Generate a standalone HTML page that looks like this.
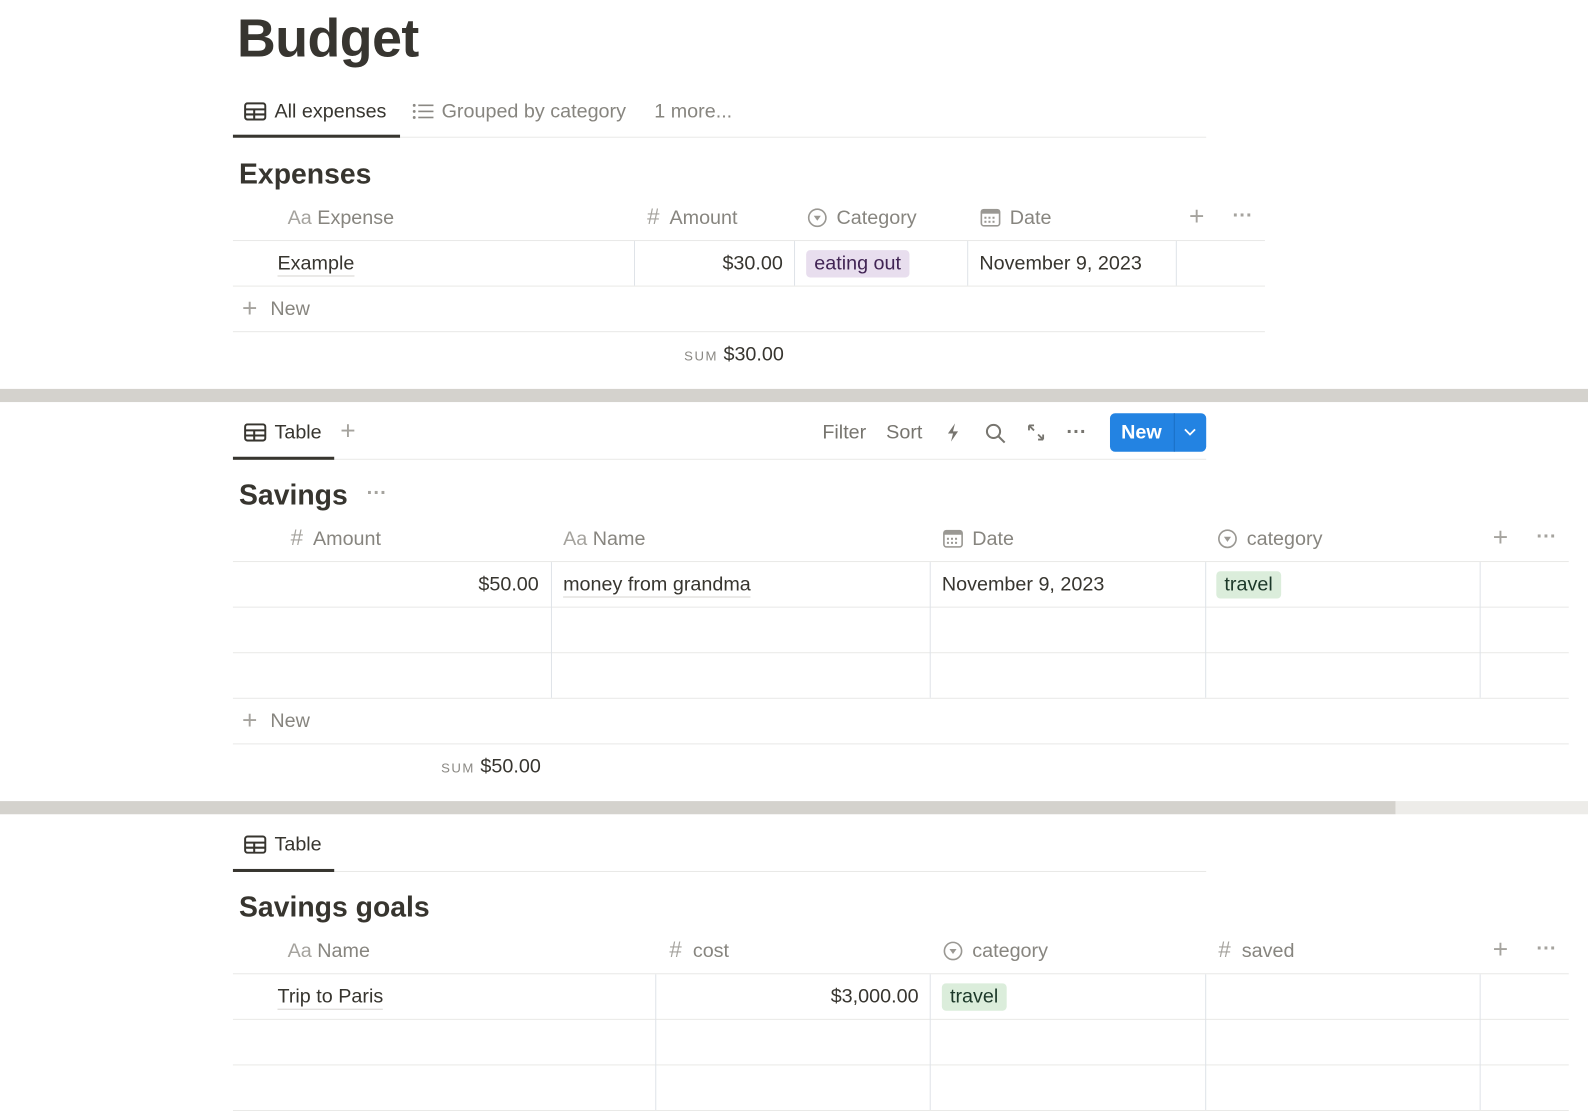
<!DOCTYPE html>
<html><head><meta charset="utf-8">
<style>
*{margin:0;padding:0;box-sizing:border-box}
body{width:1588px;height:1115px;background:#fff;position:relative;overflow:hidden;font-family:"Liberation Sans",sans-serif;color:#37352f}
#w{position:absolute;left:0;top:0;width:1568px;height:1101px;transform:scale(1.01276);transform-origin:0 0}
.t{position:absolute;white-space:nowrap;line-height:22px;font-size:19.5px}
.h{color:#87857f}
.hl{position:absolute;height:1px;background:#e9e9e7}
.vl{position:absolute;width:1px;background:#dfe3e8}
.u{border-bottom:1px solid #d6d5d1;padding-bottom:1px}
.tag{position:absolute;height:27px;border-radius:4px;font-size:19.5px;line-height:27px;padding:0 8px}
svg{position:absolute}
.sum{font-size:13px;letter-spacing:1.5px;color:#8a8883}
.b{font-weight:bold}
.dots{font-weight:bold}
</style></head><body><div id="w">

<div class="t b" style="left:234px;top:8px;font-size:53px;line-height:62px;letter-spacing:-0.5px;color:#373530">Budget</div>

<svg style="left:241px;top:101px" width="22" height="18" viewBox="0 0 22 18"><rect x="1" y="1" width="20" height="16" rx="2.5" fill="none" stroke="#37352f" stroke-width="2"/><line x1="1" y1="7" x2="21" y2="7" stroke="#37352f" stroke-width="2"/><line x1="1" y1="12" x2="21" y2="12" stroke="#37352f" stroke-width="2"/><line x1="10" y1="7" x2="10" y2="17" stroke="#37352f" stroke-width="2"/></svg>
<div class="t" style="left:271px;top:99px">All expenses</div>
<svg style="left:407px;top:102px" width="22" height="16"><circle cx="2" cy="2" r="1.4" fill="#8a8883"/><circle cx="2" cy="8" r="1.4" fill="#8a8883"/><circle cx="2" cy="14" r="1.4" fill="#8a8883"/><rect x="6" y="1.2" width="15" height="1.6" fill="#8a8883"/><rect x="6" y="7.2" width="15" height="1.6" fill="#8a8883"/><rect x="6" y="13.2" width="15" height="1.6" fill="#8a8883"/></svg>
<div class="t h" style="left:436px;top:99px">Grouped by category</div>
<div class="t h" style="left:646px;top:99px">1 more...</div>
<div class="hl" style="left:230px;top:135px;width:961px"></div>
<div style="position:absolute;left:230px;top:133px;width:165px;height:3px;background:#37352f"></div>

<div class="t b" style="left:236px;top:155px;font-size:28px;line-height:34px">Expenses</div>

<div class="t h" style="left:284px;top:204px"><span style="color:#a5a39e">Aa</span> Expense</div>
<div class="t h" style="left:639px;top:203px"><span style="color:#a5a39e;font-size:22px">#</span>&nbsp; Amount</div>
<svg style="left:797px;top:205px" width="20" height="20"><circle cx="10" cy="10" r="8.5" fill="none" stroke="#9a9893" stroke-width="1.6"/><path d="M6.5 8h7l-3.5 5z" fill="#9a9893"/></svg>
<div class="t h" style="left:826px;top:204px">Category</div>
<svg style="left:968px;top:206px" width="20" height="18"><rect x="1" y="1" width="18" height="16" rx="2.5" fill="none" stroke="#9a9893" stroke-width="1.6"/><rect x="1" y="1" width="18" height="4" fill="#9a9893"/><g fill="#9a9893"><rect x="4" y="8" width="2" height="2"/><rect x="8" y="8" width="2" height="2"/><rect x="12" y="8" width="2" height="2"/><rect x="4" y="12" width="2" height="2"/><rect x="8" y="12" width="2" height="2"/><rect x="12" y="12" width="2" height="2"/></g></svg>
<div class="t h" style="left:997px;top:204px">Date</div>
<div class="t" style="left:1174px;top:202px;color:#a5a39e;font-size:26px">+</div>
<div class="t dots" style="left:1217px;top:202px;color:#a5a39e;font-size:20px">···</div>

<div class="hl" style="left:230px;top:237px;width:1019px"></div>
<div class="hl" style="left:230px;top:282px;width:1019px"></div>
<div class="hl" style="left:230px;top:327px;width:1019px"></div>
<div class="vl" style="left:626px;top:238px;height:44px"></div>
<div class="vl" style="left:784px;top:238px;height:44px"></div>
<div class="vl" style="left:955px;top:238px;height:44px"></div>
<div class="vl" style="left:1161px;top:238px;height:44px"></div>

<div class="t" style="left:274px;top:249px"><span class="u">Example</span></div>
<div class="t" style="right:795px;top:249px">$30.00</div>
<div class="tag" style="left:796px;top:247px;background:#e8deee;color:#412454">eating out</div>
<div class="t" style="left:967px;top:249px">November 9, 2023</div>

<div class="t h" style="left:239px;top:293px;font-size:26px;color:#a5a39e">+</div>
<div class="t h" style="left:267px;top:294px">New</div>
<div class="t" style="right:794px;top:339px"><span class="sum">SUM</span> $30.00</div>

<div style="position:absolute;left:0;top:384px;width:1600px;height:13px;background:#d4d2cd"></div>

<svg style="left:241px;top:418px" width="22" height="18" viewBox="0 0 22 18"><rect x="1" y="1" width="20" height="16" rx="2.5" fill="none" stroke="#37352f" stroke-width="2"/><line x1="1" y1="7" x2="21" y2="7" stroke="#37352f" stroke-width="2"/><line x1="1" y1="12" x2="21" y2="12" stroke="#37352f" stroke-width="2"/><line x1="10" y1="7" x2="10" y2="17" stroke="#37352f" stroke-width="2"/></svg>
<div class="t" style="left:271px;top:416px">Table</div>
<div class="t" style="left:336px;top:414px;color:#a5a39e;font-size:26px">+</div>
<div class="hl" style="left:230px;top:453px;width:961px"></div>
<div style="position:absolute;left:230px;top:451px;width:100px;height:3px;background:#37352f"></div>

<div class="t h" style="left:812px;top:416px;color:#77756f">Filter</div>
<div class="t h" style="left:875px;top:416px;color:#77756f">Sort</div>
<svg style="left:933px;top:417px" width="16" height="20"><path d="M10 1L3 11h5l-2 8 7-10H8z" fill="#77756f"/></svg>
<svg style="left:972px;top:417px" width="22" height="22"><circle cx="9" cy="9" r="6.5" fill="none" stroke="#77756f" stroke-width="2"/><line x1="14" y1="14" x2="20" y2="20" stroke="#77756f" stroke-width="2"/></svg>
<svg style="left:1014px;top:418px" width="18" height="18"><path d="M2 2l5 5M2 2v5M2 2h5M16 16l-5-5M16 16v-5M16 16h-5" stroke="#77756f" stroke-width="1.8" fill="none"/></svg>
<div class="t dots" style="left:1053px;top:416px;color:#77756f;font-size:20px">···</div>
<div style="position:absolute;left:1096px;top:408px;width:95px;height:38px;background:#2383e2;border-radius:5px"></div>
<div style="position:absolute;left:1159px;top:408px;width:1px;height:38px;background:#1a6fc4"></div>
<div class="t b" style="left:1107px;top:416px;color:#fff">New</div>
<svg style="left:1168px;top:422px" width="14" height="10"><path d="M2 2l5 5 5-5" stroke="#fff" stroke-width="1.8" fill="none"/></svg>

<div class="t b" style="left:236px;top:472px;font-size:28px;line-height:34px">Savings</div>
<div class="t dots" style="left:362px;top:476px;color:#a5a39e;font-size:20px">···</div>

<div class="t h" style="left:287px;top:520px"><span style="color:#a5a39e;font-size:22px">#</span>&nbsp; Amount</div>
<div class="t h" style="left:556px;top:521px"><span style="color:#a5a39e">Aa</span> Name</div>
<svg style="left:931px;top:523px" width="20" height="18"><rect x="1" y="1" width="18" height="16" rx="2.5" fill="none" stroke="#9a9893" stroke-width="1.6"/><rect x="1" y="1" width="18" height="4" fill="#9a9893"/><g fill="#9a9893"><rect x="4" y="8" width="2" height="2"/><rect x="8" y="8" width="2" height="2"/><rect x="12" y="8" width="2" height="2"/><rect x="4" y="12" width="2" height="2"/><rect x="8" y="12" width="2" height="2"/><rect x="12" y="12" width="2" height="2"/></g></svg>
<div class="t h" style="left:960px;top:521px">Date</div>
<svg style="left:1202px;top:522px" width="20" height="20"><circle cx="10" cy="10" r="8.5" fill="none" stroke="#9a9893" stroke-width="1.6"/><path d="M6.5 8h7l-3.5 5z" fill="#9a9893"/></svg>
<div class="t h" style="left:1231px;top:521px">category</div>
<div class="t" style="left:1474px;top:519px;color:#a5a39e;font-size:26px">+</div>
<div class="t dots" style="left:1517px;top:519px;color:#a5a39e;font-size:20px">···</div>

<div class="hl" style="left:230px;top:554px;width:1319px"></div>
<div class="hl" style="left:230px;top:599px;width:1319px"></div>
<div class="hl" style="left:230px;top:644px;width:1319px"></div>
<div class="hl" style="left:230px;top:689px;width:1319px"></div>
<div class="hl" style="left:230px;top:734px;width:1319px"></div>
<div class="vl" style="left:544px;top:555px;height:134px"></div>
<div class="vl" style="left:918px;top:555px;height:134px"></div>
<div class="vl" style="left:1190px;top:555px;height:134px"></div>
<div class="vl" style="left:1461px;top:555px;height:134px"></div>

<div class="t" style="right:1036px;top:566px">$50.00</div>
<div class="t" style="left:556px;top:566px"><span class="u">money from grandma</span></div>
<div class="t" style="left:930px;top:566px">November 9, 2023</div>
<div class="tag" style="left:1201px;top:564px;background:#dbeddb;color:#1c3829">travel</div>

<div class="t" style="left:239px;top:700px;font-size:26px;color:#a5a39e">+</div>
<div class="t h" style="left:267px;top:701px">New</div>
<div class="t" style="right:1034px;top:746px"><span class="sum">SUM</span> $50.00</div>

<div style="position:absolute;left:0;top:791px;width:1378px;height:13px;background:#d4d2cd"></div>
<div style="position:absolute;left:1378px;top:791px;width:220px;height:13px;background:#edece9"></div>

<svg style="left:241px;top:825px" width="22" height="18" viewBox="0 0 22 18"><rect x="1" y="1" width="20" height="16" rx="2.5" fill="none" stroke="#37352f" stroke-width="2"/><line x1="1" y1="7" x2="21" y2="7" stroke="#37352f" stroke-width="2"/><line x1="1" y1="12" x2="21" y2="12" stroke="#37352f" stroke-width="2"/><line x1="10" y1="7" x2="10" y2="17" stroke="#37352f" stroke-width="2"/></svg>
<div class="t" style="left:271px;top:823px">Table</div>
<div class="hl" style="left:230px;top:860px;width:961px"></div>
<div style="position:absolute;left:230px;top:858px;width:100px;height:3px;background:#37352f"></div>

<div class="t b" style="left:236px;top:879px;font-size:28px;line-height:34px">Savings goals</div>

<div class="t h" style="left:284px;top:928px"><span style="color:#a5a39e">Aa</span> Name</div>
<div class="t h" style="left:661px;top:927px"><span style="color:#a5a39e;font-size:22px">#</span>&nbsp; cost</div>
<svg style="left:931px;top:929px" width="20" height="20"><circle cx="10" cy="10" r="8.5" fill="none" stroke="#9a9893" stroke-width="1.6"/><path d="M6.5 8h7l-3.5 5z" fill="#9a9893"/></svg>
<div class="t h" style="left:960px;top:928px">category</div>
<div class="t h" style="left:1203px;top:927px"><span style="color:#a5a39e;font-size:22px">#</span>&nbsp; saved</div>
<div class="t" style="left:1474px;top:926px;color:#a5a39e;font-size:26px">+</div>
<div class="t dots" style="left:1517px;top:926px;color:#a5a39e;font-size:20px">···</div>

<div class="hl" style="left:230px;top:961px;width:1319px"></div>
<div class="hl" style="left:230px;top:1006px;width:1319px"></div>
<div class="hl" style="left:230px;top:1051px;width:1319px"></div>
<div class="hl" style="left:230px;top:1096px;width:1319px"></div>
<div class="vl" style="left:647px;top:962px;height:134px"></div>
<div class="vl" style="left:918px;top:962px;height:134px"></div>
<div class="vl" style="left:1190px;top:962px;height:134px"></div>
<div class="vl" style="left:1461px;top:962px;height:134px"></div>

<div class="t" style="left:274px;top:973px"><span class="u">Trip to Paris</span></div>
<div class="t" style="right:661px;top:973px">$3,000.00</div>
<div class="tag" style="left:930px;top:971px;background:#dbeddb;color:#1c3829">travel</div>

</div></body></html>
